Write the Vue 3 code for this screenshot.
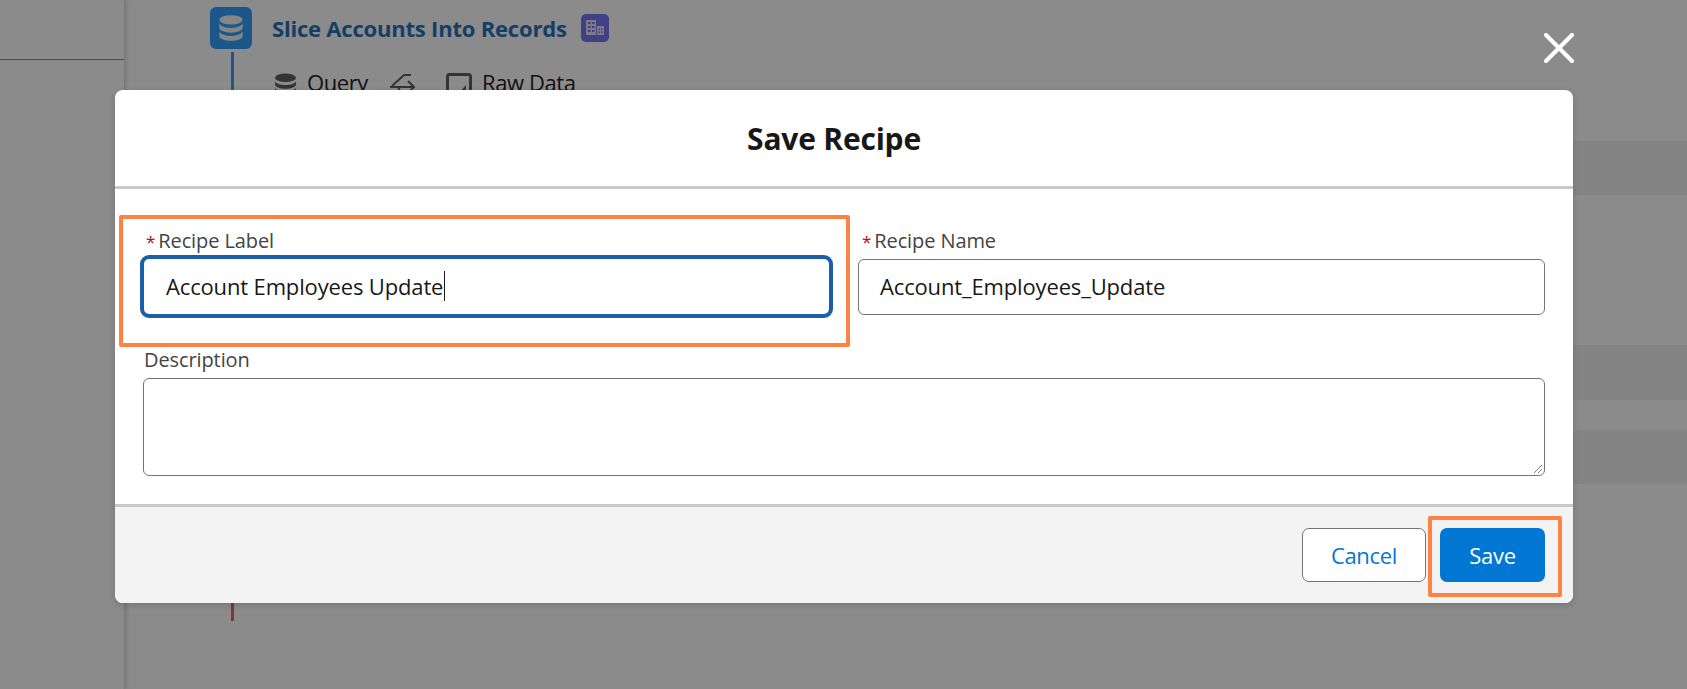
<template>
  <div class="page">
    <aside class="side">
      <div class="side-head"></div>
    </aside>
    <main class="canvas">
      <div class="node">
        <div class="node-rail">
          <div class="node-icon">
            <svg viewBox="0 0 24 24" width="28" height="28"><g fill="#f2f2f2">
              <ellipse cx="12" cy="5" rx="10" ry="4" />
              <path d="M2 8.200c1.500 2.600 5.600 3.800 10 3.800s8.500-1.200 10-3.800V12c0 2.200-4.500 4-10 4S2 14.200 2 12z" />
              <path d="M2 15c1.500 2.600 5.600 3.800 10 3.800S20.500 17.600 22 15v3.800c0 2.300-4.500 4.200-10 4.200S2 21.100 2 18.800z" />
            </g></svg>
          </div>
          <div class="node-line"></div>
          <div class="node-line end"></div>
        </div>
        <div class="node-body">
          <div class="node-title">
            <span>Slice Accounts Into Records</span>
            <span class="org-badge">
              <svg viewBox="0 0 20 20" width="20" height="20"><g fill="#dcdcf0">
                <path d="M1 2h10v15H1z" /><path d="M12 8h7v9h-7z" />
              </g><g fill="#6f72f0">
                <rect x="3" y="4" width="2.500" height="2" /><rect x="7" y="4" width="2.500" height="2" />
                <rect x="3" y="8" width="2.500" height="2" /><rect x="7" y="8" width="2.500" height="2" />
                <rect x="3" y="12" width="2.500" height="2" /><rect x="7" y="12" width="2.500" height="2" />
                <rect x="13.500" y="10.500" width="1.500" height="1.500" /><rect x="16" y="10.500" width="1.500" height="1.500" />
                <rect x="13.500" y="13.500" width="1.500" height="1.500" /><rect x="16" y="13.500" width="1.500" height="1.500" />
              </g></svg>
            </span>
          </div>
          <div class="node-meta">
            <svg class="meta-db" viewBox="0 0 24 24" width="23" height="23"><g fill="#5c5c5c">
              <ellipse cx="12" cy="5" rx="11" ry="4.500" />
              <path d="M1 8.500c1.500 2.700 6 4 11 4s9.500-1.300 11-4V12c0 2.400-5 4.500-11 4.500S1 14.400 1 12z" />
              <path d="M1 15.500c1.500 2.700 6 4 11 4s9.500-1.300 11-4V19c0 2.400-5 4.500-11 4.500S1 21.400 1 19z" />
            </g></svg>
            <span class="meta-text">Query</span>
            <svg class="meta-arrow" viewBox="0 0 26 26" width="26" height="26" fill="none" stroke="#5c5c5c" stroke-width="2">
              <path d="M0 15h24" /><path d="M18 9l6 6-6 6" /><path d="M2 14L14 3h7" /><path d="M8 15l5 9" />
            </svg>
            <svg class="meta-raw" viewBox="0 0 26 26" width="26" height="26">
              <rect x="1.500" y="1.500" width="23" height="23" rx="2" fill="none" stroke="#5c5c5c" stroke-width="3" />
              <path d="M20 12v8h-7z" fill="#5c5c5c" />
            </svg>
            <span class="meta-text">Raw Data</span>
          </div>
        </div>
      </div>
      <div class="band first"></div>
      <div class="band second"></div>
      <div class="band third"></div>
    </main>

    <div class="backdrop">
      <button class="close-btn" aria-label="Close">
        <svg viewBox="0 0 30 30" width="30" height="30" fill="none" stroke="#fff" stroke-width="4" stroke-linecap="round">
          <path d="M2 2l26 26" /><path d="M28 2L2 28" />
        </svg>
      </button>
      <section class="modal">
        <header class="modal-head">
          <h2>Save Recipe</h2>
        </header>
        <div class="modal-body">
          <div class="field first">
            <label><abbr>*</abbr>Recipe Label</label>
            <div class="input focused">Account Employees Update<i class="caret"></i></div>
          </div>
          <div class="field">
            <label><abbr>*</abbr>Recipe Name</label>
            <div class="input">Account_Employees_Update</div>
          </div>
          <div class="field wide">
            <label class="plain">Description</label>
            <div class="textarea">
              <svg class="grip" viewBox="0 0 10 10" width="10" height="10" fill="none" stroke="#777" stroke-width="1">
                <path d="M1 9l8-8" /><path d="M5 9l4-4" />
              </svg>
            </div>
          </div>
        </div>
        <footer class="modal-foot">
          <button class="btn neutral">Cancel</button>
          <button class="btn brand">Save</button>
        </footer>
      </section>
      <div class="mark mark-label"></div>
      <div class="mark mark-save"></div>
    </div>
  </div>
</template>

<script setup>
</script>

<style>
html, body { margin: 0; padding: 0; }
</style>

<style scoped>
.page {
  position: relative;
  width: 1687px;
  height: 689px;
  overflow: hidden;
  display: flex;
  background: #fbfbfb;
  font-family: "Open Sans", "Noto Sans", sans-serif;
  color: #181818;
}
.side {
  width: 124px;
  flex: none;
  border-right: 1px solid #d8d8d8;
  box-shadow: 2px 0 3px rgba(0, 0, 0, 0.12);
}
.side-head {
  height: 59px;
  border-bottom: 1px solid #8a8a8a;
}
.canvas {
  position: relative;
  flex: 1;
}
.node {
  display: flex;
  gap: 20px;
  padding: 7px 0 0 85px;
}
.node-rail {
  width: 42px;
  display: flex;
  flex-direction: column;
  align-items: center;
}
.node-icon {
  width: 42px;
  height: 42px;
  border-radius: 6px;
  background: #2a9bfc;
  display: flex;
  align-items: center;
  justify-content: center;
}
.node-line {
  width: 3px;
  height: 538px;
  margin: 3px 0 0 3px;
  background: #2a9bfc;
}
.node-line.end {
  height: 31px;
  margin-top: 0;
  background: #ea5a7c;
}
.node-title {
  display: flex;
  align-items: center;
  gap: 14px;
  height: 42px;
  font-size: 22px;
  font-weight: 700;
  letter-spacing: -0.2px;
  color: #1f6fb5;
}
.org-badge {
  width: 28px;
  height: 28px;
  border-radius: 5px;
  background: #6f72f0;
  display: flex;
  align-items: center;
  justify-content: center;
}
.node-meta {
  display: flex;
  align-items: center;
  margin-top: 16px;
  padding-left: 2px;
  font-size: 22px;
}
.meta-db {
  margin-top: 5px;
}
.meta-text {
  margin-left: 10px;
  letter-spacing: -0.4px;
}
.meta-arrow {
  margin: 5px 30px 0 22px;
}
.meta-raw {
  margin-top: 8px;
}
.band {
  position: absolute;
  left: 0;
  right: 0;
  height: 54px;
  background: #efefef;
}
.band.first { top: 141px; }
.band.second { top: 345px; height: 55px; }
.band.third { top: 430px; }

.backdrop {
  position: absolute;
  inset: 0;
  background: rgba(8, 7, 7, 0.46);
  padding: 90px 114px 0 115px;
}
.close-btn {
  position: absolute;
  top: 33px;
  left: 1544px;
  width: 30px;
  height: 30px;
  padding: 0;
  border: 0;
  background: none;
}
.modal {
  height: 513px;
  display: flex;
  flex-direction: column;
  border-radius: 8px;
  background: #fff;
  box-shadow: 0 2px 6px rgba(0, 0, 0, 0.16);
  overflow: hidden;
}
.modal-head {
  height: 96px;
  flex: none;
  display: flex;
  align-items: center;
  justify-content: center;
  padding-right: 20px;
  border-bottom: 3px solid #c9c9c9;
}
.modal-head h2 {
  margin: 0;
  font-size: 30px;
  font-weight: 700;
  letter-spacing: -0.2px;
  color: #181818;
}
.modal-body {
  flex: 1;
  display: grid;
  grid-template-columns: 693px 687px;
  grid-template-rows: 91px auto;
  column-gap: 25px;
  row-gap: 28px;
  align-content: start;
  padding: 40px 0 0 25px;
}
.field label {
  display: block;
  height: 26px;
  line-height: 24px;
  padding-left: 4px;
  font-size: 20px;
  letter-spacing: -0.1px;
  color: #444;
}
.field.first label { padding-left: 6px; }
.field label.plain { padding-left: 1px; height: 30px; }
.field label abbr {
  margin-right: 3px;
  font-size: 17px;
  color: #ba0517;
}
.field.wide { grid-column: 1 / 3; margin-left: 3px; }
.input {
  height: 56px;
  margin-top: 4px;
  box-sizing: border-box;
  display: flex;
  align-items: center;
  padding: 0 0 2px 21px;
  border: 1px solid #747474;
  border-radius: 6px;
  font-size: 22px;
  letter-spacing: -0.15px;
  color: #181818;
}
.input.focused {
  height: 63px;
  margin-top: 0;
  padding-left: 22px;
  border: 4px solid #1b5fa8;
  border-radius: 9px;
}
.caret {
  width: 1px;
  height: 30px;
  margin-left: 1px;
  background: #181818;
}
.textarea {
  position: relative;
  height: 98px;
  box-sizing: border-box;
  border: 1px solid #747474;
  border-radius: 6px;
}
.grip {
  position: absolute;
  right: 1px;
  bottom: 1px;
}
.modal-foot {
  height: 99px;
  flex: none;
  box-sizing: border-box;
  display: flex;
  justify-content: flex-end;
  align-items: flex-start;
  gap: 14px;
  padding: 21px 28px 0 0;
  background: #f3f3f3;
  border-top: 3px solid #c9c9c9;
}
.btn {
  height: 54px;
  box-sizing: border-box;
  border-radius: 7px;
  font-family: inherit;
  font-size: 22px;
  letter-spacing: -0.3px;
}
.btn.neutral {
  width: 124px;
  border: 1px solid #747474;
  background: #fff;
  color: #0176d3;
}
.btn.brand {
  width: 105px;
  border: 0;
  background: #0176d3;
  color: #fff;
}
.mark {
  position: absolute;
  box-sizing: border-box;
  border: 4px solid #ff8244;
  border-radius: 2px;
}
.mark-label {
  left: 119px;
  top: 215px;
  width: 731px;
  height: 132px;
}
.mark-save {
  left: 1428px;
  top: 516px;
  width: 134px;
  height: 81px;
}
</style>
